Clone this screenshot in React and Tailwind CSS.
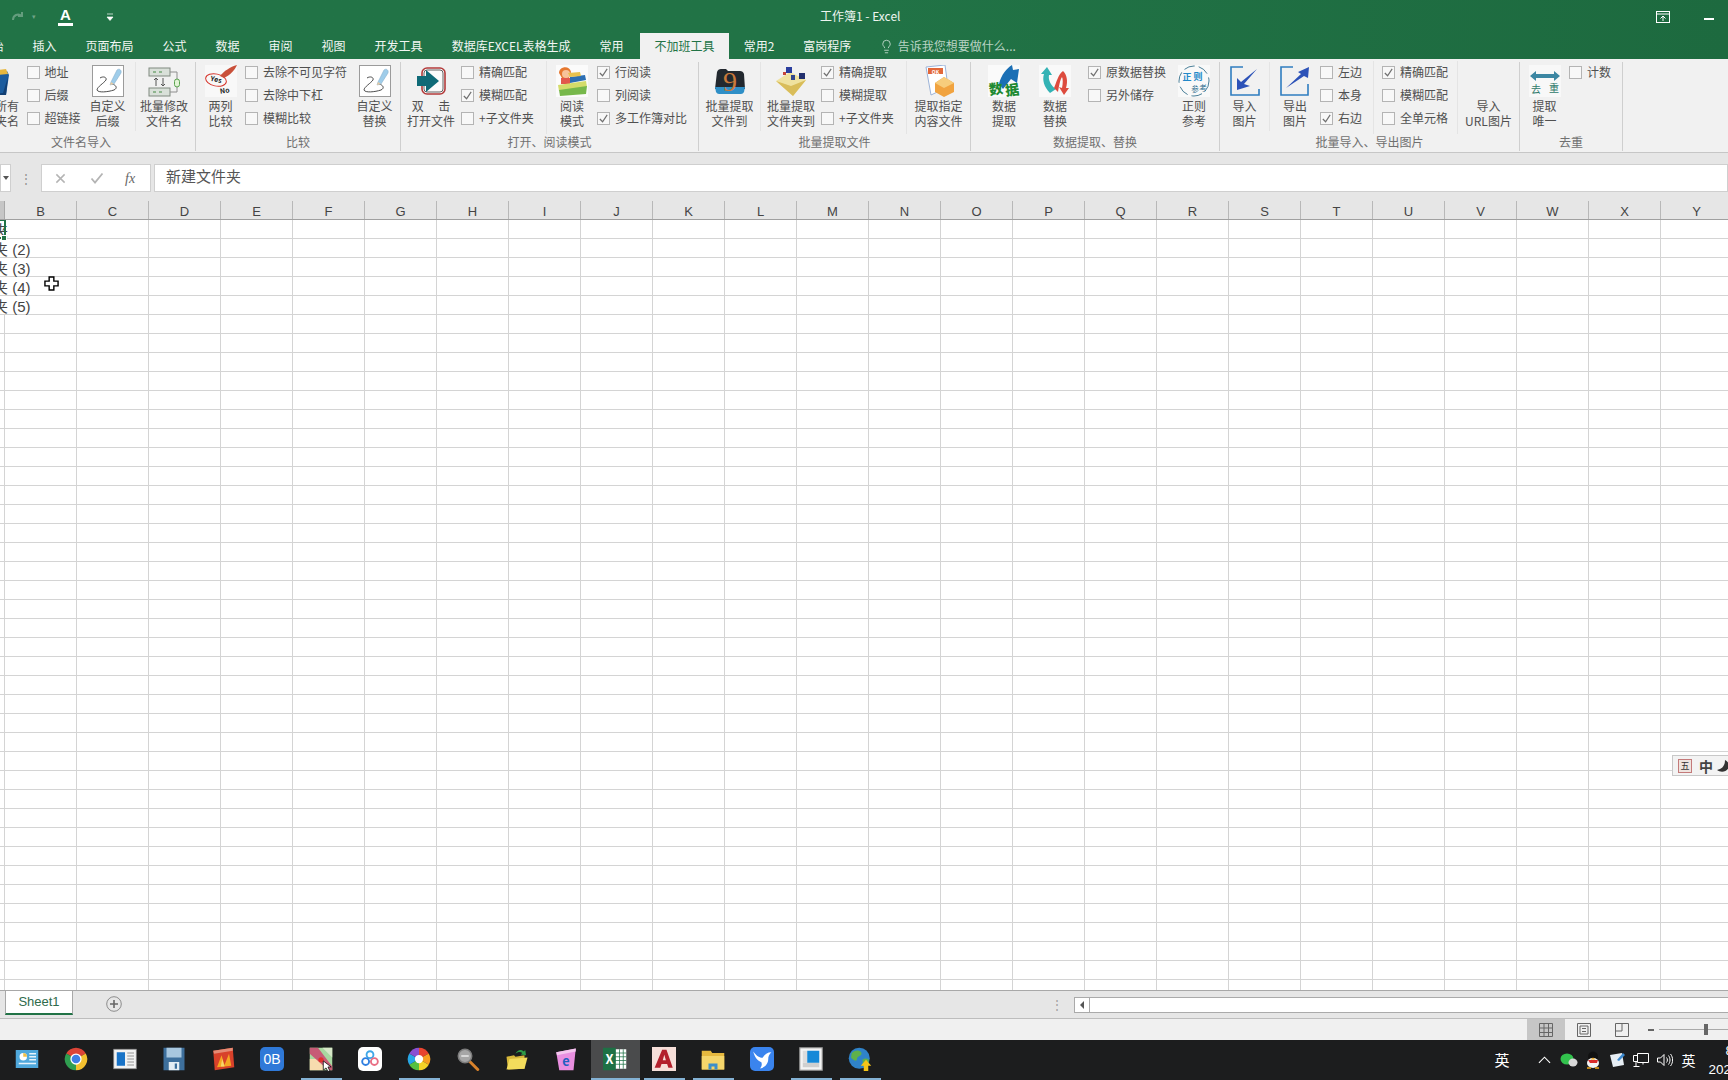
import { Lightbulb } from "lucide-react";

const COLS = "BCDEFGHIJKLMNOPQRSTUVWXY".split("");
const ROW_COUNT = 41;
const CELL_TEXT = { 0: "新建文件夹", 1: "新建文件夹 (2)", 2: "新建文件夹 (3)", 3: "新建文件夹 (4)", 4: "新建文件夹 (5)" };

const TABS = [
    { label: "开始", cls: "ml-[-35px]" },
    { label: "插入" },
    { label: "页面布局" },
    { label: "公式" },
    { label: "数据" },
    { label: "审阅" },
    { label: "视图" },
    { label: "开发工具" },
    { label: "数据库EXCEL表格生成" },
    { label: "常用" },
    { label: "不加班工具", active: true },
    { label: "常用2" },
    { label: "富岗程序" },
];

/* ---------- ribbon icons ---------- */
const Svg = ({ children, className = "w-8 h-8" }) => (
    <svg viewBox="0 0 32 32" className={className}>{children}</svg>
);

const FolderBook = () => (
    <Svg>
        <path d="M3 8 L28 6 L30 10 L27 30 L6 30 Z" fill="#1b5c9e" />
        <path d="M5 7 L27 4 L29 9 L5 11 Z" fill="#e7b73e" />
        <path d="M6 30 L27 30 L29 12 L24 28 Z" fill="#123f73" />
    </Svg>
);

const PenBox = () => (
    <Svg>
        <rect x="0.5" y="0.5" width="31" height="31" fill="#fff" stroke="#9b9b9b" />
        <path d="M8 13 C11 11 15 12 14 15 C12 18 5 22 5 25 C6 28 16 27 22 25 C26 23 24 20 20 19" fill="none" stroke="#3a3a3a" strokeWidth="0.9" />
        <path d="M19 17 L25 5 C27 3 30 5 29 8 L22 19 L18 20 Z" fill="#9fcdea" stroke="#7fa9c6" strokeWidth="0.5" />
        <path d="M18 20 L19 17 L22 19 Z" fill="#e8c9a0" />
    </Svg>
);

const Rename = () => (
    <Svg>
        <rect x="1" y="3" width="21" height="8" fill="#d9e0d9" stroke="#808a80" />
        <rect x="1" y="23" width="21" height="8" fill="#d9e0d9" stroke="#808a80" />
        <path d="M5 7h3M11 7h3M5 27h3M11 27h3" stroke="#77a777" strokeWidth="1.5" />
        <path d="M8 21V13M6 15l2-2 2 2M15 13v8M13 19l2 2 2-2" fill="none" stroke="#555" />
        <path d="M22 7h7v8M22 27h7v-6" fill="none" stroke="#8d8d8d" />
        <rect x="26.5" y="14" width="5" height="8" rx="2.5" fill="#e2f3d6" stroke="#59a34e" />
    </Svg>
);

const YesNo = () => (
    <Svg>
        <rect width="32" height="32" fill="#f8f8f8" />
        <ellipse cx="11" cy="15" rx="10.5" ry="6" fill="none" stroke="#d6342b" transform="rotate(12 11 15)" />
        <text x="11" y="17" fontSize="7" fontWeight="700" textAnchor="middle" fill="#222" transform="rotate(12 11 15)">Yes</text>
        <text x="20" y="28" fontSize="7" fontWeight="700" textAnchor="middle" fill="#222" transform="rotate(-8 20 28)">No</text>
        <path d="M15 11 C19 6 25 2 32 0 C30 5 25 10 19 13 Z" fill="#c9503a" />
    </Svg>
);

const DoubleClick = () => (
    <Svg>
        <rect x="7" y="3" width="23" height="26" rx="5" fill="#fbfbfb" stroke="#b23a3a" strokeWidth="1.6" />
        <rect x="9" y="5" width="19" height="22" rx="3" fill="none" stroke="#222" strokeWidth="0.7" />
        <path d="M2 11h9V5l13 11-13 11v-6H2z" fill="#0f6a77" />
    </Svg>
);

const ReadMode = () => (
    <Svg>
        <rect width="32" height="32" fill="#fbfbfb" />
        <path d="M3 8 C3 1 14 0 15 7 L13 13 L6 13 Z" fill="#e6782f" />
        <circle cx="10" cy="9" r="4" fill="#f7c39a" />
        <rect x="5" y="13" width="9" height="6" fill="#e2574c" />
        <path d="M14 12 L29 10 L30 15 L14 18 Z" fill="#2d6fb3" />
        <path d="M12 8 L24 7 L25 11 L14 12 Z" fill="#e8c24c" />
        <path d="M2 20 L30 16 L31 22 L3 26 Z" fill="#d4dc6a" />
        <path d="M3 25 L31 21 L30 29 L4 31 Z" fill="#77b84b" />
    </Svg>
);

const BatchNine = () => (
    <Svg>
        <path d="M3 7 Q4 4 7 4 H12 L14 6 H26 Q29 6 30 9 L31 24 L1 24 Z" fill="#22282f" />
        <path d="M1 22 H31 L30 27 Q29 29 27 29 H5 Q3 29 2 27 Z" fill="#2f8fc7" />
        <text x="16" y="26" fontSize="28" textAnchor="middle" fill="#c9793a" fontFamily="Liberation Serif">9</text>
    </Svg>
);

const FolderPeople = () => (
    <Svg>
        <path d="M1 16 L15 7 L31 15 L18 31 Z" fill="#efe2a0" />
        <path d="M1 16 L16 21 L31 15 L18 31 Z" fill="#d9bd5a" />
        <rect x="11" y="2" width="6" height="6" fill="#2b3f9e" />
        <rect x="24" y="8" width="6" height="6" fill="#23306e" />
        <rect x="16" y="10" width="4" height="5" fill="#33488f" />
        <rect x="8" y="7" width="3" height="3" fill="#c7453a" />
    </Svg>
);

const DocBox = () => (
    <Svg>
        <path d="M3 2 L22 0 L25 22 L8 30 Z" fill="#fff" stroke="#9cb3d8" />
        <rect x="5" y="3" width="15" height="6" fill="#e2683a" />
        <text x="12.5" y="8.5" fontSize="5" fontWeight="700" textAnchor="middle" fill="#fff">OK</text>
        <path d="M12 18 L21 12 L31 18 L31 27 L21 32 L12 27 Z" fill="#f1a33f" />
        <path d="M12 18 L21 23 L31 18 L21 12 Z" fill="#f7cd7c" />
    </Svg>
);

const DataHand = () => (
    <Svg>
        <rect width="32" height="32" fill="#fafafa" />
        <path d="M11 19 C13 10 19 3 24 0 L25 5 L31 4 L29 18 L23 14 L15 24 Z" fill="#1b6fb5" />
        <text x="8" y="29" fontSize="14" fontWeight="900" textAnchor="middle" fill="#1f8a33" transform="rotate(-8 8 24)">数</text>
        <text x="24" y="30" fontSize="14" fontWeight="900" textAnchor="middle" fill="#1f8a33" transform="rotate(-8 24 24)">据</text>
    </Svg>
);

const Replace = () => (
    <Svg>
        <rect width="32" height="32" fill="#f9f9f9" />
        <path d="M11 28 C5 22 3 15 5 9 L2 9 L8 2 L13 10 L10 10 C9 15 12 21 17 24 Z" fill="#34b3b5" />
        <path d="M15 23 C18 16 19 10 24 6 C28 10 29 16 27 23 L30 23 L25 30 L20 22 L23 23 C24 18 24 14 23 12 C21 15 20 21 19 27 Z" fill="#dd4b3e" />
    </Svg>
);

const Regex = () => (
    <Svg>
        <rect width="32" height="32" fill="#f9f9f9" />
        <circle cx="16" cy="16" r="15" fill="none" stroke="#1d5f7f" strokeWidth="0.8" strokeDasharray="11 4" />
        <text x="9" y="15" fontSize="9" fontWeight="700" textAnchor="middle" fill="#2288c9">正</text>
        <text x="20" y="15" fontSize="9" fontWeight="700" textAnchor="middle" fill="#2288c9">则</text>
        <text x="17" y="27" fontSize="7.5" textAnchor="middle" fill="#2f6f90">参</text>
        <text x="25" y="26" fontSize="7.5" textAnchor="middle" fill="#2f6f90">考</text>
    </Svg>
);

const ImportImg = () => (
    <Svg>
        <path d="M14 2 H2 V30 H30 V24" fill="none" stroke="#2f7dc0" strokeWidth="1.6" />
        <path d="M28 4 L15 19 L21 21 L8 25 L8 13 L12 17 Z" fill="#2c52b8" />
    </Svg>
);

const ExportImg = () => (
    <Svg>
        <path d="M14 2 H2 V30 H29 V19" fill="none" stroke="#2f7dc0" strokeWidth="1.6" />
        <path d="M7 23 L22 9 L19 7 L30 2 L29 13 L25 11 Z" fill="#2c52b8" />
    </Svg>
);

const Unique = () => (
    <Svg>
        <rect width="32" height="32" fill="#f8f8f8" />
        <path d="M1 11 L7 6 V9 H25 V6 L31 11 L25 16 V13 H7 V16 Z" fill="#3c87a3" />
        <text x="7" y="28" fontSize="10" textAnchor="middle" fill="#2f7a6b">去</text>
        <text x="25" y="27" fontSize="10" textAnchor="middle" fill="#2f7a6b">重</text>
    </Svg>
);

/* ---------- ribbon parts ---------- */
function Check({ label, checked }) {
    return (
        <div className="flex items-center h-[23px] shrink-0 whitespace-nowrap">
            <span className="w-[13px] h-[13px] shrink-0 mr-[5px] border border-[#b4b4b4] bg-[#f8f8f8] flex items-center justify-center">
                {checked && (
                    <svg viewBox="0 0 12 12" className="w-[11px] h-[11px]">
                        <path d="M2 6.5 L5 9.5 L10 2" fill="none" stroke="#707070" strokeWidth="1.3" />
                    </svg>
                )}
            </span>
            <span className="mt-[-2px]">{label}</span>
        </div>
    );
}

function CheckCol({ items, className }) {
    return (
        <div className={`flex flex-col shrink-0 mt-[-1px] ${className}`}>
            {items.map(([label, checked]) => (
                <Check key={label} label={label} checked={checked} />
            ))}
        </div>
    );
}

function Big({ icon, lines, className, line }) {
    return (
        <div className={`flex flex-col items-center shrink-0 pt-[3px] h-[69px] ${line ? "border-r border-[#e4e4e4]" : ""} ${className}`}>
            <div className="w-8 h-8 flex items-center justify-center shrink-0">{icon}</div>
            <div className="mt-[1px] text-center leading-[15px] whitespace-pre">
                {lines.map((l) => (
                    <div key={l}>{l}</div>
                ))}
            </div>
        </div>
    );
}

function Group({ label, className, children }) {
    return (
        <div className={`flex flex-col shrink-0 h-[89px] border-r border-[#cfcfcf] ${className}`}>
            <div className="flex h-[72px]">{children}</div>
            <div className="text-center text-[#707070] leading-[16px]">{label}</div>
        </div>
    );
}

/* ---------- taskbar icons ---------- */
const sector = (cx, cy, r, a, b) => {
    const p = (d) => [cx + r * Math.cos((d * Math.PI) / 180), cy + r * Math.sin((d * Math.PI) / 180)];
    const [x1, y1] = p(a);
    const [x2, y2] = p(b);
    return `M${cx} ${cy}L${x1} ${y1}A${r} ${r} 0 ${b - a > 180 ? 1 : 0} 1 ${x2} ${y2}Z`;
};

const TASK_ICONS = [
    <Svg className="w-6 h-6" key="a">
        <rect x="1" y="4" width="30" height="24" fill="#4fa8dc" />
        <circle cx="11" cy="13" r="5" fill="#fff" />
        <path d="M11 13 L11 8 A5 5 0 0 1 16 13 Z" fill="#f0c04a" />
        <path d="M19 9h9M19 13h9M19 17h9M5 22h23" stroke="#e7f3fb" strokeWidth="2" />
    </Svg>,
    <Svg className="w-6 h-6" key="b">
        <path d={sector(16, 16, 15, -150, -30)} fill="#dc4437" />
        <path d={sector(16, 16, 15, -30, 90)} fill="#f3c02f" />
        <path d={sector(16, 16, 15, 90, 210)} fill="#2f9e50" />
        <circle cx="16" cy="16" r="7.5" fill="#fff" />
        <circle cx="16" cy="16" r="5.8" fill="#3f7fe6" />
    </Svg>,
    <Svg className="w-6 h-6" key="c">
        <rect x="1" y="3" width="30" height="26" fill="#f2f2f2" stroke="#8e8e8e" />
        <rect x="5" y="7" width="11" height="18" fill="#1973c7" />
        <path d="M19 8h9M19 12h9M19 16h9M19 20h9M19 24h9" stroke="#777" />
    </Svg>,
    <Svg className="w-6 h-6" key="d">
        <rect x="2" y="1" width="28" height="30" fill="#3d6f9c" />
        <rect x="6" y="1" width="20" height="13" fill="#a8c7df" />
        <rect x="9" y="20" width="14" height="11" fill="#e4edf3" />
        <rect x="17" y="22" width="3" height="7" fill="#3d6f9c" />
    </Svg>,
    <Svg className="w-6 h-6" key="e">
        <path d="M3 5 L29 1 L31 27 L5 31 Z" fill="#d8412a" />
        <path d="M3 5 L29 1 L29 5 L4 9 Z" fill="#e58b74" />
        <path d="M8 27 L14 11 L18 24 L24 9 L27 25 Z" fill="#f5a623" />
        <path d="M13 26 L15 16 L18 26 Z" fill="#f8d66d" />
    </Svg>,
    <div key="f" className="w-6 h-6 rounded-[5px] bg-[#2f79d8] flex items-center justify-center text-white text-[14px] font-['Liberation_Sans',sans-serif] leading-none">0B</div>,
    <Svg className="w-6 h-6" key="g">
        <rect x="1" y="1" width="30" height="30" fill="#a8d8a0" />
        <path d="M1 16 L16 16 L20 31 L1 31 Z" fill="#f7dcae" />
        <path d="M1 1 L12 1 L31 26 L31 31 L26 31 L1 9 Z" fill="#c75b76" />
        <path d="M18 1 L31 1 L31 14 Z" fill="#d7e8c8" />
        <circle cx="16" cy="17" r="3.5" fill="#e0312b" />
    </Svg>,
    <div key="h" className="w-6 h-6 rounded-[5px] bg-white flex items-center justify-center">
        <Svg className="w-5 h-5">
            <circle cx="16" cy="9" r="5.5" fill="none" stroke="#3fa7e8" strokeWidth="3" />
            <circle cx="9" cy="20" r="5.5" fill="none" stroke="#2f7fe0" strokeWidth="3" />
            <circle cx="23" cy="20" r="5.5" fill="none" stroke="#e96d83" strokeWidth="3" />
        </Svg>
    </div>,
    <Svg className="w-6 h-6" key="i">
        {["#e8442f", "#f8a021", "#f5d327", "#56c13f", "#27a7e6", "#8a4fd1"].map((c, i) => (
            <path key={c} d={sector(16, 16, 15, i * 60 - 90, i * 60 - 30)} fill={c} />
        ))}
        <circle cx="16" cy="16" r="5.5" fill="#fff" />
    </Svg>,
    <Svg className="w-6 h-6" key="j">
        <path d="M18 19 L29 30" stroke="#d9822b" strokeWidth="4" strokeLinecap="round" />
        <circle cx="12" cy="12" r="9" fill="#a6a6a6" stroke="#7c7c7c" strokeWidth="2" />
        <path d="M7 12 h10" stroke="#e8e8e8" strokeWidth="2" />
    </Svg>,
    <Svg className="w-6 h-6" key="k">
        <path d="M2 13 L12 11 L14 13 L26 11 V29 L4 30 Z" fill="#d7b83a" />
        <path d="M2 30 L6 16 L30 14 L26 29 Z" fill="#f3dc5c" />
        <path d="M14 9 C17 3 22 3 25 6 L27 4 L28 11 L21 10 L23 8 C21 6 17 6 14 9 Z" fill="#2e9b46" />
    </Svg>,
    <Svg className="w-6 h-6" key="l">
        <path d="M3 7 L29 2 L26 31 L7 31 Z" fill="#e98fe0" />
        <path d="M3 7 L29 2 L29 6 L4 11 Z" fill="#f4c6ee" />
        <text x="16" y="25" fontSize="17" fontWeight="700" textAnchor="middle" fill="#1f5fc0">e</text>
    </Svg>,
    <Svg className="w-6 h-6" key="m">
        <rect x="12" y="3" width="19" height="26" fill="#fff" />
        <path d="M16 3v26M22 3v26M27 3v26M12 8h19M12 13h19M12 18h19M12 23h19" stroke="#1e7145" />
        <rect x="0" y="1" width="17" height="30" fill="#1e7145" />
        <text x="8.5" y="22" fontSize="17" fontWeight="700" textAnchor="middle" fill="#fff">X</text>
    </Svg>,
    <div key="n" className="w-6 h-6 bg-[#f6dfd9] flex items-center justify-center">
        <Svg className="w-5 h-5">
            <path d="M1 30 L13 1 L20 1 L30 30 L23 30 L21 24 L12 24 L10 30 Z M14 18 H19 L16.5 9 Z" fill="#b3202c" fillRule="evenodd" />
        </Svg>
    </div>,
    <Svg className="w-6 h-6" key="o">
        <path d="M1 5 H13 L15 8 H31 V30 H1 Z" fill="#e6b93f" />
        <path d="M1 12 H31 V30 H1 Z" fill="#f5d66b" />
        <path d="M10 30 V22 H22 V30 H18 V26 H14 V30 Z" fill="#3d8fc9" />
    </Svg>,
    <div key="p" className="w-6 h-6 rounded-[5px] bg-[#3a84ee] flex items-center justify-center">
        <Svg className="w-5 h-5">
            <path d="M2 4 C8 12 12 14 17 14 C20 8 25 5 31 5 C27 9 26 12 26 16 C26 24 20 30 13 31 C16 27 16 24 15 21 C9 19 4 13 2 4 Z" fill="#fff" />
        </Svg>
    </div>,
    <Svg className="w-6 h-6" key="q">
        <rect x="1" y="1" width="30" height="30" fill="#f4f4f4" stroke="#8f8f8f" strokeWidth="1.5" />
        <rect x="5" y="21" width="22" height="6" fill="#cfcfcf" />
        <rect x="5" y="5" width="6" height="16" fill="#dcdcdc" />
        <rect x="11" y="5" width="16" height="16" fill="#1589d8" />
    </Svg>,
    <Svg className="w-6 h-6" key="r">
        <circle cx="15" cy="15" r="14" fill="#2f83c9" />
        <path d="M5 8 C10 3 17 4 18 8 C19 12 12 12 12 16 C12 20 7 18 4 14 Z M19 17 C23 14 28 15 28 18 C27 24 22 27 20 25 C18 23 21 21 19 17 Z" fill="#5fb14a" />
        <path d="M24 17 L31 25 H27 V32 H21 V25 H17 Z" fill="#f5c518" />
    </Svg>,
];
const ACTIVE_BARS = [6, 8, 12, 13, 14, 16, 17];

export default function App() {
    return (
        <div className="relative w-[1728px] h-[1080px] overflow-hidden flex flex-col bg-white text-[12px] text-[#505050] font-['Noto_Sans_CJK_SC',sans-serif]">
            {/* Title bar */}
            <div className="h-[33px] shrink-0 flex items-center bg-linear-to-r from-[#217346] via-[#217346] to-[#1d6a3f] text-white">
                <div className="w-[820px] shrink-0 flex items-center">
                    <svg viewBox="0 0 16 16" className="w-4 h-4 ml-[10px] opacity-30">
                        <path d="M3 11 C3 6 8 4 12 7 M12 3 V7 H8" fill="none" stroke="#fff" strokeWidth="2" />
                    </svg>
                    <span className="ml-[6px] text-[7px] text-[#6fa387]">▾</span>
                    <div className="ml-[22px] flex flex-col items-center leading-none font-['Liberation_Sans',sans-serif]">
                        <span className="text-[15px] font-bold leading-[14px]">A</span>
                        <span className="w-[15px] h-[3px] mt-[1px] bg-white" />
                    </div>
                    <svg viewBox="0 0 8 8" className="w-[8px] h-[8px] ml-[33px]">
                        <path d="M1 1h6M1 4h6L4 7.5Z" fill="#fff" stroke="#fff" strokeWidth="0.7" />
                    </svg>
                </div>
                <span className="text-[12px] mt-[-2px] whitespace-nowrap text-[#eef5f0]">工作簿1 - Excel</span>
                <div className="ml-auto flex items-center">
                    <svg viewBox="0 0 14 12" className="w-[14px] h-[12px] mr-[34px]">
                        <rect x="0.5" y="0.5" width="13" height="11" fill="none" stroke="#fff" />
                        <path d="M1 3h12M7 10V5M4.5 7.5 7 5l2.5 2.5" fill="none" stroke="#fff" />
                    </svg>
                    <span className="w-[10px] h-[2px] bg-white mr-[14px] mt-[4px]" />
                </div>
            </div>

            {/* Tabs */}
            <div className="h-[26px] shrink-0 flex items-stretch bg-linear-to-r from-[#217346] via-[#217346] to-[#1d6a3f] text-[#f2f6f3] whitespace-nowrap">
                {TABS.map((t) => (
                    <div
                        key={t.label}
                        className={`shrink-0 flex items-center px-[14.5px] ${t.cls || ""} ${t.active ? "bg-[#f1f1f1] text-[#217346] ml-[2px] px-[13.5px]" : ""}`}
                    >
                        {t.label}
                    </div>
                ))}
                <div className="flex items-center ml-[13px] text-[#b9d3c4]">
                    <Lightbulb className="w-[15px] h-[15px] mr-[4px]" strokeWidth={1.5} />
                    告诉我您想要做什么...
                </div>
            </div>

            {/* Ribbon */}
            <div className="h-[94px] shrink-0 flex pt-[3px] bg-[#f1f1f1] border-b border-[#c6c6c6] whitespace-nowrap">
                <Group label="文件名导入" className="w-[293px] ml-[-97px] pl-[64px]">
                    <Big icon={<FolderBook />} lines={["读取所有", "文件夹名"]} className="w-[56px]" />
                    <CheckCol className="w-[57px] pl-[3.5px]" items={[["地址"], ["后缀"], ["超链接"]]} />
                    <Big icon={<PenBox />} lines={["自定义", "后缀"]} className="w-[56px]" line />
                    <Big icon={<Rename />} lines={["批量修改", "文件名"]} className="w-[56px]" />
                </Group>
                <Group label="比较" className="w-[205px]">
                    <Big icon={<YesNo />} lines={["两列", "比较"]} className="w-[49px]" />
                    <CheckCol className="w-[104px]" items={[["去除不可见字符"], ["去除中下杠"], ["模糊比较"]]} />
                    <Big icon={<PenBox />} lines={["自定义", "替换"]} className="w-[51px]" />
                </Group>
                <Group label="打开、阅读模式" className="w-[298px]">
                    <Big icon={<DoubleClick />} lines={["双\u3000 击", "打开文件"]} className="w-[60px]" />
                    <CheckCol className="w-[86px] border-r border-[#e4e4e4]" items={[["精确匹配"], ["模糊匹配", true], ["+子文件夹"]]} />
                    <Big icon={<ReadMode />} lines={["阅读", "模式"]} className="w-[50px]" />
                    <CheckCol className="w-[100px]" items={[["行阅读", true], ["列阅读"], ["多工作簿对比", true]]} />
                </Group>
                <Group label="批量提取文件" className="w-[272px]">
                    <Big icon={<BatchNine />} lines={["批量提取", "文件到"]} className="w-[62px]" line />
                    <Big icon={<FolderPeople />} lines={["批量提取", "文件夹到"]} className="w-[60px]" />
                    <CheckCol className="w-[86px] border-r border-[#e4e4e4]" items={[["精确提取", true], ["模糊提取"], ["+子文件夹"]]} />
                    <Big icon={<DocBox />} lines={["提取指定", "内容文件"]} className="w-[63px]" />
                </Group>
                <Group label="数据提取、替换" className="w-[249px]">
                    <Big icon={<DataHand />} lines={["数据", "提取"]} className="w-[66px]" />
                    <Big icon={<Replace />} lines={["数据", "替换"]} className="w-[36px]" />
                    <CheckCol className="w-[100px] pl-[15px]" items={[["原数据替换", true], ["另外储存"]]} />
                    <Big icon={<Regex />} lines={["正则", "参考"]} className="w-[42px]" />
                </Group>
                <Group label="批量导入、导出图片" className="w-[300px]">
                    <Big icon={<ImportImg />} lines={["导入", "图片"]} className="w-[50px]" line />
                    <Big icon={<ExportImg />} lines={["导出", "图片"]} className="w-[50px]" />
                    <CheckCol className="w-[54px] border-r border-[#e4e4e4]" items={[["左边"], ["本身"], ["右边", true]]} />
                    <CheckCol className="w-[84px] pl-[8px] border-r border-[#e4e4e4]" items={[["精确匹配", true], ["模糊匹配"], ["全单元格"]]} />
                    <Big lines={["导入", "URL图片"]} className="w-[61px]" />
                </Group>
                <Group label="去重" className="w-[103px]">
                    <Big icon={<Unique />} lines={["提取", "唯一"]} className="w-[49px]" />
                    <CheckCol className="w-[53px]" items={[["计数"]]} />
                </Group>
            </div>

            {/* Formula bar */}
            <div className="h-[39px] shrink-0 flex items-end bg-[#e6e6e6]">
                <div className="w-[11px] h-[28px] bg-white border border-[#cfcfcf] flex items-center justify-end pr-[1px]">
                    <span className="w-0 h-0 border-x-[3px] border-t-[4px] border-x-transparent border-t-[#555]" />
                </div>
                <span className="w-[30px] h-[28px] flex items-center justify-center text-[#909090] text-[12px]">⋮</span>
                <div className="w-[110px] h-[28px] bg-white border border-[#cfcfcf] flex items-center text-[#b4b4b4] font-['Liberation_Sans',sans-serif]">
                    <svg viewBox="0 0 12 12" className="w-[11px] h-[11px] ml-[13px]">
                        <path d="M1.5 1.5 L10.5 10.5 M10.5 1.5 L1.5 10.5" stroke="#b4b4b4" strokeWidth="1.6" />
                    </svg>
                    <svg viewBox="0 0 14 12" className="w-[14px] h-[12px] ml-[24px]">
                        <path d="M1.5 6.5 L5 10.5 L12.5 1.5" fill="none" stroke="#b4b4b4" strokeWidth="1.8" />
                    </svg>
                    <span className="ml-[21px] italic font-['Liberation_Serif',serif] text-[14px] text-[#666]">fx</span>
                </div>
                <div className="flex-1 h-[28px] ml-[3px] pl-[11px] pb-[3px] bg-white border border-[#cfcfcf] flex items-center text-[15px] text-[#555]">新建文件夹</div>
            </div>

            {/* Column headers */}
            <div className="h-[28px] shrink-0 pt-[9px] flex bg-[#e6e6e6] border-b border-[#a0a0a0] font-['Liberation_Sans',sans-serif] text-[13px] text-[#444]">
                <div className="w-[5px] shrink-0 bg-[#c6c6c6] border-r border-[#a8a8a8]" />
                {COLS.map((c) => (
                    <div key={c} className="w-[72px] shrink-0 flex items-center justify-center pt-[3px] border-r border-[#b8b8b8]">{c}</div>
                ))}
            </div>

            {/* Sheet grid */}
            <div className="flex-1 overflow-hidden text-[15px] text-[#444] leading-[22px] font-['Liberation_Sans','Noto_Sans_CJK_SC',sans-serif]">
                {Array.from({ length: ROW_COUNT }, (_, r) => (
                    <div key={r} className="flex h-[19px]">
                        <div className={`relative w-[5px] shrink-0 whitespace-nowrap border-b border-[#d4d4d4] ${CELL_TEXT[r] ? "" : "border-r"}`}>
                            {CELL_TEXT[r] && <span className="inline-block ml-[-67px]">{CELL_TEXT[r]}</span>}
                            {r === 0 && (
                                <div className="absolute z-10 left-[-10px] right-[-1px] top-[-1px] h-[20px] border-2 border-[#217346]">
                                    <span className="absolute right-[-3px] bottom-[-4px] w-[6px] h-[6px] bg-[#217346] border border-white" />
                                </div>
                            )}
                        </div>
                        {COLS.map((c) => (
                            <div key={c} className="w-[72px] shrink-0 border-r border-b border-[#d4d4d4]" />
                        ))}
                    </div>
                ))}
            </div>

            {/* Sheet tabs and scrollbar */}
            <div className="h-[29px] shrink-0 flex items-start bg-[#e6e6e6] border-y border-[#a8a8a8] border-b-[#bdbdbd]">
                <div className="ml-[5px] w-[68px] h-[24px] bg-white border-x border-[#a8a8a8] border-b-2 border-b-[#217346] flex items-center justify-center text-[13px] text-[#2f6b4c] font-['Liberation_Sans',sans-serif]">Sheet1</div>
                <svg viewBox="0 0 16 16" className="w-4 h-4 ml-[33px] mt-[5px]">
                    <circle cx="8" cy="8" r="7.3" fill="none" stroke="#8c8c8c" />
                    <path d="M8 4v8M4 8h8" stroke="#666" strokeWidth="1.6" />
                </svg>
                <span className="ml-[929px] mt-[5px] text-[#a0a0a0] text-[12px] leading-[16px]">⋮</span>
                <div className="ml-[11px] mt-[6px] flex-1 h-[16px] flex bg-white border-y border-[#aaa]">
                    <div className="w-[16px] flex items-center justify-center border-x border-[#aaa]">
                        <span className="w-0 h-0 border-y-[4px] border-r-[4px] border-y-transparent border-r-[#555]" />
                    </div>
                </div>
            </div>

            {/* Status bar */}
            <div className="h-[21px] shrink-0 flex items-center bg-[#f0f0f0]">
                <div className="ml-[1527px] w-[38px] h-full bg-[#c6c6c6] flex items-center justify-center">
                    <svg viewBox="0 0 14 14" className="w-[14px] h-[14px]">
                        <path d="M.5.5h13v13H.5zM.5 5h13M.5 9.5h13M5 .5v13M9.5.5v13" fill="none" stroke="#666" />
                    </svg>
                </div>
                <svg viewBox="0 0 14 14" className="w-[14px] h-[14px] ml-[12px]">
                    <path d="M.5.5h13v13H.5zM3 3h8v8H3zM5 5.5h4M5 8.5h4" fill="none" stroke="#666" />
                </svg>
                <svg viewBox="0 0 14 14" className="w-[14px] h-[14px] ml-[24px]">
                    <path d="M.5.5h13v13H.5zM.5 8h6.5V.5" fill="none" stroke="#666" />
                </svg>
                <span className="ml-[19px] w-[6px] h-[2px] bg-[#666]" />
                <div className="ml-[5px] flex-1 h-[1px] bg-[#aaa] flex items-center">
                    <span className="ml-[45px] w-[4px] h-[11px] bg-[#666]" />
                </div>
            </div>

            {/* Taskbar */}
            <div className="h-[40px] shrink-0 flex bg-[#1c1d1e] text-white">
                <div className="flex pl-[2.5px]">
                    {TASK_ICONS.map((icon, i) => (
                        <div key={i} className={`w-[49px] h-[40px] flex flex-col ${i === 12 ? "bg-[#4a4b4c]" : ""}`}>
                            <div className="flex-1 flex items-center justify-center">{icon}</div>
                            <span className={`h-[2px] ${i === 12 ? "" : "mx-[4px]"} ${ACTIVE_BARS.includes(i) ? "bg-[#84b2d4]" : ""}`} />
                        </div>
                    ))}
                </div>
                <div className="ml-[610px] w-[24px] flex items-center justify-center text-[15px]">英</div>
                <div className="ml-[23px] flex items-center">
                    <div className="w-[24px] flex justify-center">
                        <svg viewBox="0 0 14 8" className="w-[13px] h-[8px]">
                            <path d="M1 7 L7 1 L13 7" fill="none" stroke="#fff" strokeWidth="1.2" />
                        </svg>
                    </div>
                    <div className="w-[24px] flex justify-center">
                        <svg viewBox="0 0 18 14" className="w-[18px] h-[14px]">
                            <ellipse cx="7" cy="6" rx="6.5" ry="5.5" fill="#32c24d" />
                            <ellipse cx="13" cy="9.5" rx="4.5" ry="4" fill="#d8d8d8" />
                        </svg>
                    </div>
                    <div className="w-[24px] flex justify-center">
                        <svg viewBox="0 0 16 18" className="w-[16px] h-[18px]">
                            <ellipse cx="8" cy="6" rx="5" ry="5.5" fill="#111" />
                            <ellipse cx="8" cy="12" rx="6" ry="5" fill="#f4f4f4" />
                            <path d="M3 9h10l-1 3H5Z" fill="#d92b2b" />
                            <path d="M8 6.5 L5.5 8.5h5Z" fill="#f3a91d" />
                            <path d="M2 17h4M10 17h4" stroke="#f3a91d" strokeWidth="1.5" />
                        </svg>
                    </div>
                    <div className="w-[24px] flex justify-center">
                        <svg viewBox="0 0 16 16" className="w-[16px] h-[16px]">
                            <path d="M1 3 L13 1 L15 13 L4 15 Z" fill="#e7eef4" />
                            <path d="M8 8 L14 1 L16 3 L10 9 Z" fill="#3c8ad0" />
                        </svg>
                    </div>
                    <div className="w-[24px] flex justify-center">
                        <svg viewBox="0 0 16 14" className="w-[16px] h-[14px]">
                            <path d="M4.5.5h11v9h-11zM.5 2.5h4M.5 2.5v6h4M3 8.5v5M.5 13.5h6M10 9.5v2" fill="none" stroke="#fff" />
                        </svg>
                    </div>
                    <div className="w-[24px] flex justify-center">
                        <svg viewBox="0 0 16 14" className="w-[16px] h-[14px]">
                            <path d="M.5 5h3L7 1.5v11L3.5 9h-3zM9.5 4.5c1.2 1.500 1.200 3.500 0 5M11.500 2.500c2 2.800 2 6.200 0 9M13.500 1c2.800 3.500 2.800 8.500 0 12" fill="none" stroke="#fff" />
                        </svg>
                    </div>
                    <div className="w-[24px] flex justify-center text-[14px]">英</div>
                </div>
                <div className="ml-[5px] w-[66px] shrink-0 flex flex-col items-center justify-center text-[13.5px] leading-[19px] font-['Liberation_Sans',sans-serif]">
                    <span>8:30</span>
                    <span>2022/8/26</span>
                </div>
            </div>

            {/* Floating overlays */}
            <svg viewBox="0 0 16 16" className="absolute left-[44px] top-[276px] w-[15px] h-[15px]">
                <path d="M5.500 1h5v4.500H15v5h-4.500V15h-5v-4.500H1v-5h4.500z" fill="#fff" stroke="#000" strokeWidth="1.5" />
            </svg>
            <svg viewBox="0 0 10 14" className="absolute left-[322px] top-[1060px] w-[10px] h-[13px]">
                <path d="M1 1v10l3-2.500 2 4 2-1-2-4h3.500z" fill="#fff" stroke="#000" strokeWidth="0.8" />
            </svg>
            <div className="absolute left-[1672px] top-[755px] w-[70px] h-[21px] bg-[#f3f3f3] border border-[#c8c8c8] flex items-center pl-[5px]">
                <span className="w-[14px] h-[14px] border border-[#c47a7a] bg-[#efe4df] flex items-center justify-center text-[9px] text-[#333] leading-none">五</span>
                <span className="ml-[7px] text-[14px] font-bold text-[#444] leading-none">中</span>
                <svg viewBox="0 0 12 12" className="w-[12px] h-[12px] ml-[4px]">
                    <path d="M8 0 C8 6 5 9 0 10 C4 13 11 12 12 6 C12 3 10 1 8 0Z" fill="#333" />
                </svg>
            </div>
        </div>
    );
}
